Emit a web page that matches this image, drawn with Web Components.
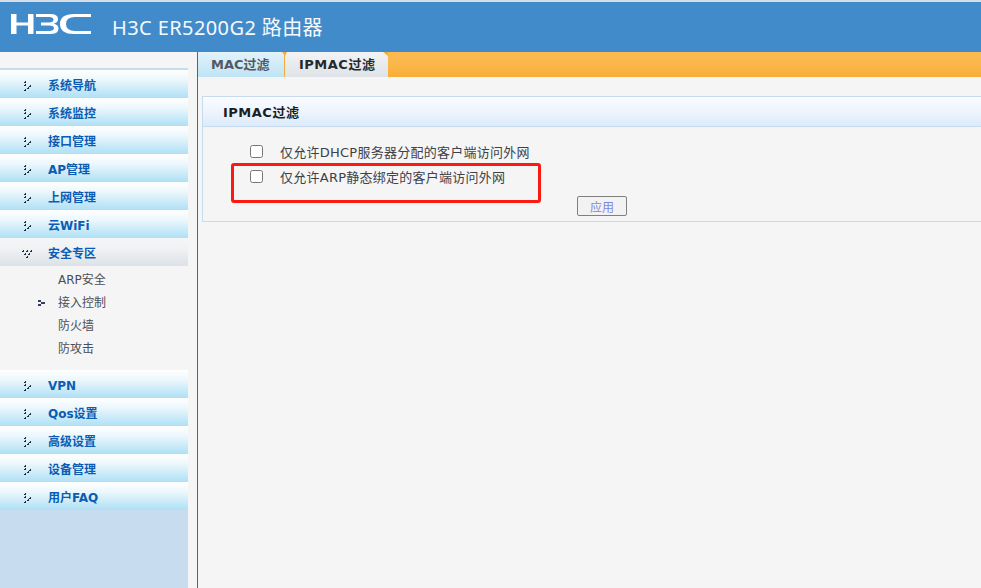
<!DOCTYPE html>
<html lang="zh">
<head>
<meta charset="utf-8">
<title>H3C ER5200G2</title>
<style>
  html, body { margin: 0; height: 100%; overflow: hidden; background: #f5f5f5; }
  body { font-family: "DejaVu Sans", "Noto Sans CJK SC", sans-serif; }
</style>
</head>
<body>
<router-page>
  <router-header slot="header">H3C ER5200G2 路由器</router-header>
  <side-menu slot="side">
    <menu-item>系统导航</menu-item>
    <menu-item>系统监控</menu-item>
    <menu-item>接口管理</menu-item>
    <menu-item>AP管理</menu-item>
    <menu-item>上网管理</menu-item>
    <menu-item>云WiFi</menu-item>
    <menu-item open>安全专区</menu-item>
    <sub-menu>
      <sub-item>ARP安全</sub-item>
      <sub-item current>接入控制</sub-item>
      <sub-item>防火墙</sub-item>
      <sub-item>防攻击</sub-item>
    </sub-menu>
    <menu-item>VPN</menu-item>
    <menu-item>Qos设置</menu-item>
    <menu-item>高级设置</menu-item>
    <menu-item>设备管理</menu-item>
    <menu-item>用户FAQ</menu-item>
  </side-menu>
  <tab-bar slot="tabs">
    <tab-item>MAC过滤</tab-item>
    <tab-item active>IPMAC过滤</tab-item>
  </tab-bar>
  <filter-panel slot="main" heading="IPMAC过滤">
    <check-row>仅允许DHCP服务器分配的客户端访问外网</check-row>
    <check-row>仅允许ARP静态绑定的客户端访问外网</check-row>
    <apply-button slot="actions">应用</apply-button>
    <red-mark slot="mark"></red-mark>
  </filter-panel>
</router-page>

<script>
  // small helper, every element below is just markup + style in a shadow root
  class Base extends HTMLElement {
    constructor() {
      super();
      this.attachShadow({ mode: 'open' });
      this.shadowRoot.innerHTML = this.markup();
    }
  }

  // one dot of the dotted arrows: a 2x2 block with its top left corner cut
  const dot = (x, y) => `<path d="M${x + 1} ${y}h1v2h-2v-1h1z"/>`;

  const closedArrow = `
    <svg width="8" height="10" viewBox="0 0 8 10" shape-rendering="crispEdges" fill="#1d2a44">
      ${dot(1, 0)}${dot(1, 3)}${dot(6, 4)}${dot(4, 6)}${dot(1, 8)}
    </svg>`;

  const openArrow = `
    <svg width="10" height="8" viewBox="0 0 10 8" shape-rendering="crispEdges" fill="#1d2a44">
      ${dot(0, 0)}${dot(4, 0)}${dot(8, 0)}${dot(2, 3)}${dot(6, 3)}${dot(4, 6)}
    </svg>`;

  customElements.define('router-page', class extends Base {
    markup() {
      return `<style>
        :host { display: grid; grid-template-columns: 188px 9px 1fr; grid-template-rows: 52px 1fr; width: 981px; height: 588px; overflow: hidden; }
        .top { grid-column: 1 / 4; }
        .rule { background: #f5f5f5; }
        .right { border-left: 1px solid #2a6cc4; min-width: 0; background: #f5f5f5; }
      </style>
      <div class="top"><slot name="header"></slot></div>
      <slot name="side"></slot>
      <div class="rule"></div>
      <div class="right"><slot name="tabs"></slot><slot name="main"></slot></div>`;
    }
  });

  customElements.define('router-header', class extends Base {
    markup() {
      return `<style>
        :host { display: flex; align-items: center; box-sizing: border-box; height: 52px; padding: 0 0 0 10px; background: #428bca; border-top: 2px solid #d5dee6; color: #f6f9fc; font: 20px/28px "Noto Sans", "Noto Sans CJK SC", sans-serif; letter-spacing: .4px; }
        svg { display: block; margin: 0 21px 0 0; }
        span { padding-top: 2px; }
      </style>
      <svg width="81" height="50" viewBox="10 2 81 50" fill="#fff">
        <path d="M11 14h5.500v8.500h11.500v-8.500h5.500v20h-5.500v-8.500h-11.500v8.500h-5.500z"/>
        <path d="M36 14h14q8 0 8 5q0 3.500-4 4.500q4.500 1.500 4.500 5q0 5.500-8.500 5.500h-14v-3h13q5 0 5-3q0-2.500-5-2.500h-8v-3h8q4.500 0 4.500-3q0-2.500-4.500-2.500h-13z"/>
        <path d="M91 14h-17q-14 0-14 10t14 10h17v-3h-16q-9 0-9-7t9-7h16z"/>
      </svg>
      <span><slot></slot></span>`;
    }
  });

  customElements.define('side-menu', class extends Base {
    markup() {
      return `<style>
        :host { display: block; box-sizing: border-box; width: 188px; padding-top: 16px; background: linear-gradient(#f5f5f5 458px, #c8dcf0 458px); }
        .line { height: 2px; background: #c8dcf0; }
      </style><div class="line"></div><slot></slot>`;
    }
  });

  customElements.define('menu-item', class extends Base {
    markup() {
      const open = this.hasAttribute('open');
      return `<style>
        :host { display: flex; align-items: center; height: 28px; padding: 4px 0 0 22px; box-sizing: border-box;
          background: linear-gradient(#ffffff, #ecf7fc 35%, #aee0f5); color: #0a5cb4; font-size: 12px; line-height: 16px; font-weight: bold; }
        :host([open]) { background: linear-gradient(#f6f6f7, #eff1f3 40%, #dde2e7); }
        i { display: flex; width: 26px; align-items: center; }
        svg { margin: ${open ? '0' : '-1px 0 0 1px'}; }
      </style><i>${open ? openArrow : closedArrow}</i><slot></slot>`;
    }
  });

  customElements.define('sub-menu', class extends Base {
    markup() {
      return `<style>
        :host { display: block; box-sizing: border-box; height: 104px; padding-top: 2px; }
      </style><slot></slot>`;
    }
  });

  customElements.define('sub-item', class extends Base {
    markup() {
      const mark = this.hasAttribute('current')
        ? `<svg width="7" height="6" viewBox="0 0 7 6" shape-rendering="crispEdges" fill="#33415c"><rect x="0" y="0" width="3" height="2"/><rect x="3" y="2" width="4" height="2"/><rect x="0" y="4" width="3" height="2"/></svg>`
        : '';
      return `<style>
        :host { display: flex; align-items: center; height: 23px; padding-left: 38px; color: #4a4f57; font-size: 12px; line-height: 16px; }
        i { display: flex; width: 20px; }
      </style><i>${mark}</i><slot></slot>`;
    }
  });

  customElements.define('tab-bar', class extends Base {
    markup() {
      return `<style>
        :host { display: flex; height: 25px; background: linear-gradient(#fbba50, #fbb648 60%, #f8ad33); }
      </style><slot></slot>`;
    }
  });

  customElements.define('tab-item', class extends Base {
    markup() {
      return `<style>
        :host { position: relative; display: flex; align-items: center; box-sizing: border-box; height: 25px; width: 86px; padding-left: 13px;
          background: linear-gradient(#e2f3fb, #bfe4f6); color: #55595f; font-size: 13px; line-height: 16px; font-weight: bold; }
        :host([active]) { width: 104px; padding-left: 14px; letter-spacing: .5px; background: linear-gradient(#f2f3f4, #dfe3e7); color: #26282c; border-left: 1px solid #f4ac3a; }
        :host([active])::before, :host([active])::after { content: ""; position: absolute; top: 0; width: 5px; height: 4px; background: #f4ac3a; }
        :host([active])::before { left: -3px; clip-path: polygon(0 0, 100% 0, 60% 100%); }
        :host([active])::after { right: 0; clip-path: polygon(0 0, 100% 0, 100% 100%); }
      </style><slot></slot>`;
    }
  });

  customElements.define('filter-panel', class extends Base {
    markup() {
      return `<style>
        :host { display: block; position: relative; box-sizing: border-box; height: 126px; margin: 19px -4px 0 4px; border: 1px solid #c6dcee; border-right: 0; }
        h2 { margin: 0; box-sizing: border-box; height: 30px; padding: 2px 0 0 20px; display: flex; align-items: center; border-bottom: 1px solid #c6dcee;
          background: linear-gradient(#fafbff, #f0f5fe 45%, #dceafa); color: #1c1e22; font-size: 13px; line-height: 16px; letter-spacing: .5px; font-weight: bold; }
        .rows { padding: 13px 0 0 47px; }
        .actions { display: flex; margin: 6px 0 0 374px; }
      </style>
      <h2>${this.getAttribute('heading')}</h2>
      <div class="rows"><slot></slot></div>
      <div class="actions"><slot name="actions"></slot></div>
      <slot name="mark"></slot>`;
    }
  });

  customElements.define('check-row', class extends Base {
    markup() {
      return `<style>
        :host { display: flex; align-items: center; height: 25px; color: #3e4148; font-size: 13px; line-height: 16px; letter-spacing: .25px; }
        input { width: 13px; height: 13px; margin: -3px 17px 0 0; background: #fff; }
      </style><input type="checkbox"><slot></slot>`;
    }
  });

  customElements.define('apply-button', class extends Base {
    markup() {
      return `<style>
        :host { display: flex; align-items: center; justify-content: center; box-sizing: border-box; width: 50px; height: 20px; border: 1px solid #808080; border-radius: 2px; background: #f2f2f2; color: #7f86e8; font-size: 12px; }
      </style><slot></slot>`;
    }
  });

  // the red box somebody drew over the screenshot, it sits on top of the rows
  customElements.define('red-mark', class extends Base {
    markup() {
      return `<style>
        :host { position: absolute; left: 28px; top: 66px; width: 304px; height: 34px; border: 3px solid #fb1a12; border-radius: 3px; }
      </style>`;
    }
  });
</script>
</body>
</html>
